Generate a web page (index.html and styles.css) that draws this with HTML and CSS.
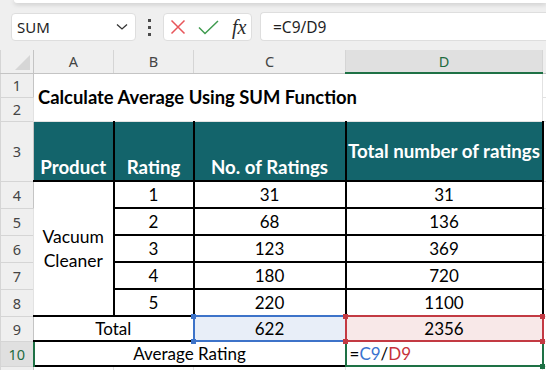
FILE: index.html
```html
<!DOCTYPE html>
<html>
<head>
<meta charset="utf-8">
<link rel="stylesheet" href="styles.css">
</head>
<body>
<div class="toolbar">
  <div class="ribbon-edge"></div>
  <div class="fbar">
    <div class="namebox">
      <span>SUM</span>
      <svg class="chev" width="12" height="8" viewBox="0 0 12 8"><polyline points="1,1.5 6,6 11,1.5" fill="none" stroke="#333" stroke-width="1.3"/></svg>
    </div>
    <div class="kebab"><i></i><i></i><i></i></div>
    <div class="fxbox">
      <svg class="ic-x" width="16" height="16" viewBox="0 0 16 16"><path d="M1.5 1.5 L14.5 14.5 M14.5 1.5 L1.5 14.5" stroke="#e8555a" stroke-width="1.5" fill="none"/></svg>
      <svg class="ic-ok" width="21" height="15" viewBox="0 0 21 15"><polyline points="1,7.5 7,13.5 20,1" fill="none" stroke="#3f9b4f" stroke-width="1.5"/></svg>
      <span class="fx">fx</span>
    </div>
    <div class="formula">=C9/D9</div>
  </div>
</div>
<div class="sheet">
  <table class="grid">
    <colgroup>
      <col class="c-rh"><col class="c-a"><col class="c-b"><col class="c-c"><col class="c-d"><col class="c-e">
    </colgroup>
    <tr class="h-col">
      <th class="corner"><span class="tri"></span></th>
      <th class="ch">A</th><th class="ch">B</th><th class="ch">C</th><th class="ch sel-col">D</th><th class="ch"></th>
    </tr>
    <tr class="h-title">
      <th class="rh">1</th>
      <td colspan="4" rowspan="2" class="title">Calculate Average Using SUM Function</td>
      <td></td>
    </tr>
    <tr class="h-title">
      <th class="rh">2</th>
      <td></td>
    </tr>
    <tr class="h-head">
      <th class="rh">3</th>
      <td class="hd">Product</td>
      <td class="hd">Rating</td>
      <td class="hd">No. of Ratings</td>
      <td class="hd mid">Total number of ratings</td>
      <td></td>
    </tr>
    <tr class="h-data">
      <th class="rh">4</th>
      <td rowspan="5" class="prod">Vacuum<br>Cleaner</td>
      <td class="bx">1</td><td class="bx">31</td><td class="bx">31</td><td></td>
    </tr>
    <tr class="h-data">
      <th class="rh">5</th>
      <td class="bx">2</td><td class="bx">68</td><td class="bx">136</td><td></td>
    </tr>
    <tr class="h-data">
      <th class="rh">6</th>
      <td class="bx">3</td><td class="bx">123</td><td class="bx">369</td><td></td>
    </tr>
    <tr class="h-data">
      <th class="rh">7</th>
      <td class="bx">4</td><td class="bx">180</td><td class="bx">720</td><td></td>
    </tr>
    <tr class="h-data">
      <th class="rh">8</th>
      <td class="bx">5</td><td class="bx">220</td><td class="bx">1100</td><td></td>
    </tr>
    <tr class="h-tot">
      <th class="rh">9</th>
      <td colspan="2" class="bx">Total</td>
      <td class="bx ref-c">622<span class="sel blue"><i class="sq tl"></i><i class="sq tr"></i><i class="sq bl"></i><i class="sq br"></i></span></td>
      <td class="bx ref-d">2356<span class="sel red"><i class="sq tl"></i><i class="sq tr"></i><i class="sq bl"></i><i class="sq br"></i></span></td>
      <td></td>
    </tr>
    <tr class="h-tot">
      <th class="rh sel-row">10</th>
      <td colspan="3" class="bx">Average Rating</td>
      <td class="bx active">=<span class="rc">C9</span>/<span class="rd">D9</span><span class="sel green"><i class="sq br"></i></span></td>
      <td></td>
    </tr>
    <tr class="h-rest">
      <th class="rh"></th><td></td><td></td><td></td><td></td><td></td>
    </tr>
  </table>
</div>
</body>
</html>
```

FILE: styles.css
```css
* { box-sizing: border-box; }
html, body { margin: 0; padding: 0; }
body {
  width: 546px;
  height: 370px;
  overflow: hidden;
  background: #fff;
  font-family: "Lato", "Liberation Sans", sans-serif;
}

/* ---------- formula bar ---------- */
.toolbar {
  height: 50px;
  background: #efefef;
  overflow: hidden;
}
.ribbon-edge {
  height: 3px;
  margin-left: 14px;
  background: #fff;
  border-bottom-left-radius: 6px;
  box-shadow: 0 1px 5px rgba(0, 0, 0, 0.22);
}
.fbar {
  display: flex;
  align-items: center;
  height: 29px;
  margin-top: 9px;
  padding-left: 11px;
}
.namebox {
  width: 125px;
  height: 28px;
  margin-top: 1px;
  background: #fff;
  border: 1px solid #dedede;
  border-radius: 4px;
  display: flex;
  align-items: center;
  justify-content: space-between;
  padding: 0 7px 0 5px;
  font-family: "Noto Sans", sans-serif;
  font-size: 15px;
  color: #1f1f1f;
}
.chev { display: block; }
.kebab {
  width: 27px;
  display: flex;
  flex-direction: column;
  align-items: center;
  gap: 4px;
  margin-top: 1px;
}
.kebab i {
  display: block;
  width: 3px;
  height: 3px;
  background: #4a4a4a;
}
.fxbox {
  width: 89px;
  height: 28px;
  margin-top: 1px;
  background: #fff;
  border: 1px solid #dedede;
  border-radius: 4px;
  display: flex;
  align-items: center;
  padding-left: 6px;
}
.ic-x { display: block; }
.ic-ok { display: block; margin-left: 12px; }
.fx {
  margin-left: 13px;
  font-family: "Liberation Serif", "DejaVu Serif", serif;
  font-style: italic;
  font-size: 20px;
  color: #2b2b2b;
  line-height: 1;
}
.formula {
  flex: 1;
  height: 29px;
  margin-left: 8px;
  background: #fff;
  border: 1px solid #dedede;
  border-right: 0;
  border-radius: 4px 0 0 4px;
  padding-left: 12px;
  display: flex;
  align-items: center;
  font-family: "Noto Sans", sans-serif;
  font-size: 15.5px;
  color: #1f1f1f;
}

/* ---------- sheet ---------- */
.grid {
  border-collapse: collapse;
  table-layout: fixed;
  width: 546px;
}
.c-rh { width: 33px; }
.c-a { width: 80px; }
.c-b { width: 80px; }
.c-c { width: 152px; }
.c-d { width: 197px; }
.c-e { width: 4px; }

.grid th, .grid td {
  padding: 0;
  border: 1px solid #e2e2e2;
  overflow: hidden;
  white-space: nowrap;
}
.grid td {
  font-size: 17px;
  color: #000;
  text-align: center;
  vertical-align: middle;
}

.h-col { height: 23px; }
.h-title { height: 24px; }
.h-head { height: 60px; }
.h-data { height: 27px; }
.h-tot { height: 25px; }
.h-rest { height: 10px; }

/* headers */
.grid th {
  background: #efefef;
  border-color: #d5d5d5;
  font-family: "Noto Sans", sans-serif;
  font-weight: normal;
  font-size: 14.5px;
  color: #444;
  text-align: center;
  vertical-align: middle;
}
.h-col th { border-top: 0; border-bottom-color: #c4c4c4; }
.corner { position: relative; border-right-color: #c4c4c4 !important; }
.tri {
  position: absolute;
  right: 3px;
  bottom: 3px;
  width: 0;
  height: 0;
  border-left: 15px solid transparent;
  border-bottom: 15px solid #d6d6d6;
}
.grid th.rh { border-right-color: #c4c4c4; }
.grid th.sel-col {
  background: #e0e0e0;
  color: #1d6b3f;
  border-bottom: 2px solid #1e7145;
}
.grid th.sel-row {
  background: #e0e0e0;
  color: #1d6b3f;
  border-right: 2px solid #1e7145;
}

/* content */
.grid td.title {
  text-align: left;
  padding-left: 4px;
  font-weight: bold;
  font-size: 18.4px;
  overflow: visible;
}
.grid td.hd {
  background: #13646b;
  color: #fff;
  font-weight: bold;
  font-size: 18.7px;
  vertical-align: bottom;
  padding-bottom: 2px;
  border-left: 2px solid #000;
  border-right: 2px solid #000;
  border-bottom: 2px solid #000;
}
.grid td.hd:first-of-type { border-left-color: #e2e2e2; border-left-width: 1px; }
.grid td.hd.mid { vertical-align: middle; padding-bottom: 0; }

.grid td.prod {
  white-space: normal;
  font-size: 17.5px;
  line-height: 24px;
  border: 2px solid #000;
  border-left: 1px solid #e2e2e2;
}
.grid td.bx { border: 2px solid #000; }
.grid tr.h-tot td.bx:first-of-type { border-left: 1px solid #e2e2e2; }

.ref-c { background: #e8eef8; position: relative; overflow: visible !important; }
.ref-d { background: #f8e8e8; position: relative; overflow: visible !important; }
.grid td.active {
  position: relative;
  text-align: left;
  padding-left: 3px;
  overflow: visible;
}
.rc { color: #3a73cf; }
.rd { color: #c7323c; }

.sel {
  position: absolute;
  top: -2px;
  left: -2px;
  right: -2px;
  bottom: -2px;
  border: 2px solid;
  pointer-events: none;
}
.sel.blue { border-color: #3d73c9; }
.sel.red { border-color: #c33a43; z-index: 2; }
.sel.green { border-color: #1e7145; z-index: 1; }
.sq {
  position: absolute;
  width: 5px;
  height: 5px;
}
.blue .sq { background: #3d73c9; }
.red .sq { background: #c33a43; }
.green .sq { background: #1e7145; }
.sq.tl { top: -3.5px; left: -3.5px; }
.sq.tr { top: -3.5px; right: -3.5px; }
.sq.bl { bottom: -3.5px; left: -3.5px; }
.sq.br { bottom: -3.5px; right: -3.5px; }
```
